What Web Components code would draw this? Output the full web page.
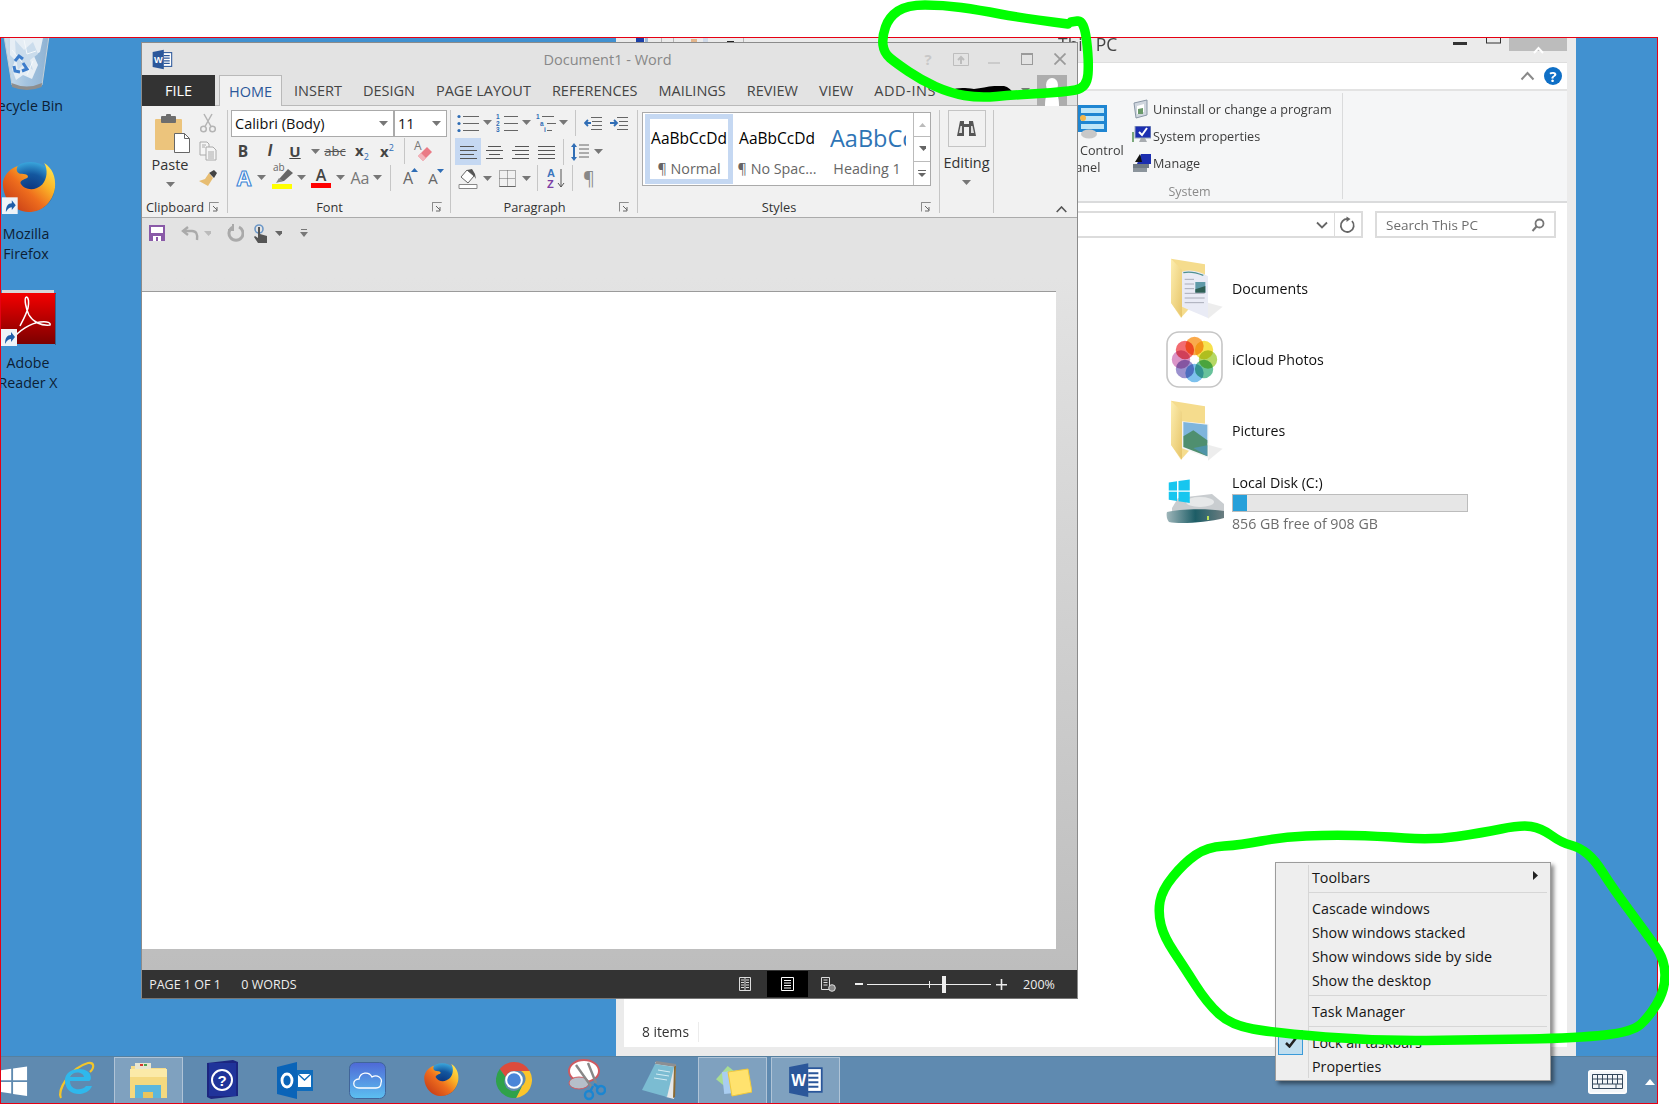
<!doctype html>
<html><head><meta charset="utf-8"><title>Desktop</title>
<style>html,body{margin:0;padding:0;background:#fff}</style></head>
<body><x-screen></x-screen>
<script>
function def(name,css,html){
  customElements.define(name,class extends HTMLElement{
    connectedCallback(){
      if(this.shadowRoot)return;
      const r=this.attachShadow({mode:'open'});
      r.innerHTML='<style>'+css+'</style>'+(typeof html==='function'?html(this):html);
    }
  });
}
function tools(start,items){let x=start,s='';for(const [c,w,h] of items){const l=c-w/2;s+=`<span class="c" style="margin-left:${l-x}px;width:${w}px">${h}</span>`;x=l+w;}return s;}
const caret=(c='#777')=>`<svg width="9" height="5"><path d="M0 0h9L4.5 5z" fill="${c}"/></svg>`;
const vsep=(h=26)=>`<i class="vs" style="height:${h}px"></i>`;
const lines=(w,ys,c='#666',x=0,extra='')=>`<svg width="${w}" height="18" viewBox="0 0 ${w} 18">${ys.map(a=>`<path d="M${a[0]+x} ${a[1]+.5}H${a[2]+x}" stroke="${c}"/>`).join('')}${extra}</svg>`;

/* ---------- icons ---------- */
const wordIcon=s=>`<svg width="${s}" height="${s}" viewBox="0 0 32 32"><rect x="12" y="5.5" width="18" height="21" fill="#fff" stroke="#2b579a" stroke-width="1.6"/><path d="M18 10h9M18 14h9M18 18h9M18 22h9" stroke="#2b579a" stroke-width="1.8"/><path d="M1 4.5 18 1v30L1 27.5z" fill="#2b579a"/><text x="9.5" y="21" font-size="14" font-weight="700" fill="#fff" text-anchor="middle" font-family="Liberation Sans">W</text></svg>`;
const ffIcon=(s,arrow)=>`<svg width="${s}" height="${s}" viewBox="0 0 56 56" style="overflow:visible"><defs><radialGradient id="fb" cx=".5" cy=".62" r=".62"><stop offset="0" stop-color="#0a2f78"/><stop offset=".6" stop-color="#13579f"/><stop offset="1" stop-color="#3aa6dc"/></radialGradient><linearGradient id="fo" x1=".95" y1=".1" x2=".15" y2=".9"><stop offset="0" stop-color="#ffe34d"/><stop offset=".3" stop-color="#fbb327"/><stop offset=".6" stop-color="#ee6d1d"/><stop offset="1" stop-color="#c93f17"/></linearGradient></defs><circle cx="30" cy="27" r="25" fill="url(#fb)"/><path d="M2 22C4 14 10 8 17 6c-2 4-1 7 3 8 4 0 9 1 7 4-4 2-8 3-7 6 4 7 15 8 22 1 5-6 6-15 2-22 8 5 12 14 11 25-2 14-12 25-27 25C13 53 1 39 2 22z" fill="url(#fo)"/>${arrow?shortcut(1,38):''}</svg>`;
const shortcut=(x,y)=>`<g transform="translate(${x} ${y})"><rect width="16" height="17" fill="#eef3f8"/><path d="M4 15c0-6 2-9 6-9V3l4 5-4 5v-3c-2 0-4 1-6 5z" fill="#1f5ea8"/></g>`;
const recycleIcon=`<svg width="47" height="55" viewBox="0 0 47 55"><defs><linearGradient id="rb" x1="0" x2="1"><stop offset="0" stop-color="#cfdfec"/><stop offset=".5" stop-color="#a3c3e0"/><stop offset="1" stop-color="#8fb2d2"/></linearGradient></defs><path d="M1 0H46L39 49Q24 56 9 49z" fill="url(#rb)" stroke="#c3ced6"/><path d="M7 2h33l-3 14-6 4 4 9-6 14-9-4-7 5-4-11 3-9-5-5z" fill="#e6eef5"/><path d="M12 4l9 10 9-8 5 12-8 6 3 10-9-6-6 6-2-12z" fill="#cadcec"/><path d="M21 4l3 14 9-3M9 14l10 12M30 25l-6 14" stroke="#f5f9fc" fill="none"/><path d="M12 25l4-5 4 3M20 27l4 6-5 2M11 30l1 5 5 1" fill="none" stroke="#3c7ccb" stroke-width="3"/><path d="M8.500 47Q24 54 39 47l-.4 4Q24 57 9 51z" fill="#8e8e8e"/></svg>`;
const adobeIcon=`<svg width="55" height="56" viewBox="0 0 55 56"><defs><linearGradient id="ar" x1="0" y1="0" x2="0" y2="1"><stop offset="0" stop-color="#f40000"/><stop offset="1" stop-color="#7c0000"/></linearGradient></defs><rect x="1" y="0" width="52" height="4" fill="#d8d8d8"/><rect x="0" y="3" width="55" height="51" fill="url(#ar)"/><rect x="54" y="4" width="1" height="51" fill="#3b5f86"/><path d="M25 7c-2 2 0 12 3 18 4 7 12 11 21 10 1-2-2-4-10-3-9 1-22 9-27 17M25 7c3 0 3 6 2 11-2 7-5 12-8 18" fill="none" stroke="#fff" stroke-width="1.5"/>${shortcut(0,39)}</svg>`;
const folder=inner=>`<svg width="60" height="65" viewBox="200 50 180 195"><defs><linearGradient id="fy" x1="0" y1="0" x2="1" y2="1"><stop offset="0" stop-color="#fdeeb0"/><stop offset="1" stop-color="#e6c468"/></linearGradient></defs><path d="M326 190l44 12-44 36z" fill="#000" opacity=".07"/><path d="M215 58l102 17v80l-72 80-30-45z" fill="#f5dc8d"/>${inner}<path d="M215 58l33 34v143l-33-45z" fill="url(#fy)"/></svg>`;
const docsIcon=folder(`<path d="M248 97c25-8 52-2 78 14v125c-25-12-52-22-78-34z" fill="#e9ebf5"/><path d="M252 100c20-5 40 0 60 8" stroke="#4d8f90" stroke-width="4" fill="none"/><rect x="288" y="128" width="30" height="32" fill="#5f9aa8"/><path d="M288 150l30-10v20h-30z" fill="#2f5f54"/><path d="M256 120h28M256 134h28M256 148h28M256 162h60M256 176h60M256 190h58" stroke="#a9acb8" stroke-width="3"/>`);
const picsIcon=folder(`<path d="M248 120l80 8v103l-80-30z" fill="#f5f5f5"/><path d="M252 122l72 8v55l-72-20z" fill="#7fb5dc"/><path d="M252 165l30-18 42 30v48l-72-28z" fill="#4f8f6f"/><path d="M282 200l42-8v33z" fill="#4f94a8"/>`);
const petals=['#fa9c2e','#f6dc30','#a9d24a','#4fb88a','#68b7ea','#8a7fc6','#d583bf','#f0535a'];
const photosIcon=`<svg width="57" height="57" viewBox="0 0 57 57"><rect x="1" y="1" width="55" height="55" rx="12" fill="#fff" stroke="#c6c6c6" stroke-width="1.6"/>${petals.map((c,i)=>`<circle cx="28.5" cy="15" r="9.2" fill="${c}" opacity=".86" style="mix-blend-mode:multiply" transform="rotate(${i*45} 28.5 28.5)"/>`).join('')}</svg>`;
const winLogo=(c,o='')=>`<path d="M1 4.5 12 3v12.3H1zM14 2.7 29 .5v14.8H14zM1 17h11v12.3L1 27.8zM14 17h15v15l-15-2.2z" fill="${c}" ${o}/>`;
const diskIcon=`<svg width="60" height="48" viewBox="0 0 60 48"><defs><linearGradient id="dk" x1="0" x2="1"><stop offset="0" stop-color="#9fb6ba"/><stop offset=".5" stop-color="#1d5d66"/><stop offset="1" stop-color="#6b7d80"/></linearGradient></defs><path d="M12 20l34-4 12 10v8L6 38v-8z" fill="#c9cdd0"/><ellipse cx="34" cy="24" rx="14" ry="5" fill="#e6e8e9"/><path d="M1 34c10-3 40-4 57-1v7C40 45 12 46 3 44 1 42 0 37 1 34z" fill="url(#dk)"/><rect x="41" y="38" width="2" height="4" fill="#b9e35a"/><g transform="translate(2 1) scale(.75)">${winLogo('#17c6ef')}</g></svg>`;
const cpIcon=`<svg width="50" height="36" viewBox="0 0 50 36"><rect x="2" y="0" width="46" height="27" fill="#1f86d2"/><rect x="22" y="3" width="23" height="5" fill="#bfe6f8"/><rect x="22" y="11" width="23" height="5" fill="#bfe6f8"/><rect x="22" y="19" width="23" height="5" fill="#bfe6f8"/><circle cx="24" cy="13" r="3" fill="#f5b74a"/><ellipse cx="30" cy="29" rx="8" ry="4.500" fill="#c8c8c8"/></svg>`;
const unIcon=`<svg width="18" height="20" viewBox="0 0 18 20"><path d="M2 4l13-3v15L4 19z" fill="#cfd6de" stroke="#8a97a6"/><path d="M5 7l7-2v8l-7 2z" fill="#fff"/><path d="M6 10l5-1v6H6z" fill="#6a9a6a"/></svg>`;
const sysIcon=`<svg width="19" height="19" viewBox="0 0 19 19"><rect x="3" y="0" width="16" height="12" fill="#1c2fb0" stroke="#9ab"/><path d="M7 6l3 3 5-7" fill="none" stroke="#fff" stroke-width="2"/><path d="M9 12h4l2 4H7z" fill="#a8acb0"/><rect x="0" y="6" width="2" height="10" fill="#7ba87b"/></svg>`;
const mgIcon=`<svg width="19" height="21" viewBox="0 0 19 21"><path d="M9 2l10 0v10H5z" fill="#1c2fb0"/><path d="M8 2l-5 8h7z" fill="#111"/><rect x="1" y="12" width="16" height="4" fill="#6f7a84"/><rect x="1" y="16" width="14" height="4" fill="#8b949c"/></svg>`;

const T={
 cut:`<svg width="16" height="20" viewBox="0 0 16 20" fill="none" stroke="#b4b4b4" stroke-width="1.5"><circle cx="3.5" cy="16" r="2.8"/><circle cx="12.5" cy="16" r="2.8"/><path d="M5 13.5 12 1M11 13.5 4 1"/></svg>`,
 copy:`<svg width="18" height="20" viewBox="0 0 18 20" fill="#f5f5f5" stroke="#aaa"><path d="M1 1h7l2 2v11H1z"/><path d="M7 6h7l3 3v10H7z"/><path d="M9 11h6M9 13h6M9 15h6M9 17h6M3 4h4M3 6h3" stroke="#aaa"/></svg>`,
 brush:`<svg width="18" height="17" viewBox="0 0 18 17"><path d="M12 5l-2 -2 5-3 3 3-3 5z" fill="#444"/><path d="M10 3l4 5-5 8-9-5 6-2z" fill="#e7bd72"/></svg>`,
 paste:`<svg width="35" height="39" viewBox="0 0 35 39"><rect x="0" y="5" width="27" height="31" rx="1" fill="#ecc47c"/><rect x="6" y="2" width="15" height="7" rx="1" fill="#6d6d6d"/><rect x="11" y="0" width="5" height="5" rx="1" fill="#6d6d6d"/><path d="M19.5 19.5h10l5 5v14h-15z" fill="#fff" stroke="#666"/><path d="M29.5 19.5v5h5" fill="none" stroke="#666"/></svg>`,
 launch:`<svg width="10" height="10" viewBox="0 0 10 10" fill="none" stroke="#8d8d8d"><path d="M.5 5V.5h9M.5 .5"/><path d="M.5 .5v9M.5.5h9"/><path d="M4 4l4 4M8 5v4H4" stroke="#666"/></svg>`,
 eraser:`<svg width="20" height="24" viewBox="0 0 20 24"><text x="1" y="11" font-size="12" fill="#777" font-family="Open Sans">A</text><path d="M5 17l9-9 5 5-9 9z" fill="#ea7a85"/><path d="M5 17l3-3 5 5-3 3z" fill="#f3b3ba"/></svg>`,
 hl:`<svg width="20" height="14" viewBox="0 0 20 14"><path d="M4 13l2-4 8-9 5 4-9 8z" fill="#666"/><path d="M2 14l3-5 4 3z" fill="#888"/></svg>`,
 bul:lines(22,[[6,2,22],[6,9,22],[6,16,22]],'#666',0,'<g fill="#2f6db5"><circle cx="2" cy="2.5" r="1.6"/><circle cx="2" cy="9.5" r="1.6"/><circle cx="2" cy="16.5" r="1.6"/></g>'),
 num:lines(22,[[8,2,22],[8,9,22],[8,16,22]],'#666',0,'<g fill="#2f6db5" font-size="6.5" font-weight="700" font-family="Liberation Sans"><text x="0" y="5">1</text><text x="0" y="12">2</text><text x="0" y="18">3</text></g>'),
 ml:lines(20,[[6,2,18],[11,9,20],[11,16,16]],'#666',0,'<g fill="#2f6db5" font-size="6.5" font-weight="700" font-family="Liberation Sans"><text x="0" y="5">1</text><text x="4" y="12">a</text><text x="8" y="18">i</text></g>'),
 out:lines(18,[[7,3,18],[8,7,18],[8,11,18],[7,15,18]],'#666',0,'<path d="M7 9H1m3-3L1 9l3 3" stroke="#2f6db5" stroke-width="1.8" fill="none"/>'),
 ind:lines(18,[[7,3,18],[9,7,18],[9,11,18],[7,15,18]],'#666',0,'<path d="M0 9h6M4 6l3 3-3 3" stroke="#2f6db5" stroke-width="1.8" fill="none"/>'),
 al:lines(17,[[0,3,14],[0,7,17],[0,11,14],[0,15,17]],'#555'),
 ac:lines(17,[[2,3,15],[0,7,17],[3,11,14],[0,15,17]],'#555'),
 ar:lines(17,[[3,3,17],[0,7,17],[3,11,17],[0,15,17]],'#555'),
 aj:lines(17,[[0,3,17],[0,7,17],[0,11,17],[0,15,17]],'#555'),
 sp:`<svg width="18" height="20" viewBox="0 0 18 20"><path d="M3 1l3 4H4v10h2l-3 4-3-4h2V5H0z" fill="#2f6db5"/><path d="M8 3h10M8 7h10M8 11h10M8 15h10" stroke="#666"/></svg>`,
 fill:`<svg width="21" height="21" viewBox="0 0 21 21"><path d="M4 9l6-7 7 6-6 7z" fill="#fff" stroke="#666"/><path d="M10 2l5-1 3 5 1 5-2-3z" fill="#555"/><path d="M2 16.5h18v4H2z" fill="#fff" stroke="#888"/></svg>`,
 bor:`<svg width="17" height="17" viewBox="0 0 17 17" fill="none" stroke="#666" stroke-dasharray="1 1"><path d="M.5.5h16v16H.5zM8.5 .5v16M.5 8.5h16"/><path d="M.5 16.5h16" stroke-dasharray="none"/></svg>`,
 sort:`<svg width="18" height="22" viewBox="0 0 18 22"><text x="0" y="10" font-size="11" font-weight="700" fill="#3a75bd" font-family="Liberation Sans">A</text><text x="0" y="21" font-size="11" font-weight="700" fill="#7c3fa5" font-family="Liberation Sans">Z</text><path d="M14 2v18M11 16l3 4 3-4" fill="none" stroke="#555"/></svg>`,
 bino:`<svg width="19" height="17" viewBox="0 0 19 17" fill="#555"><path d="M3 1h4v3h5V1h4l3 15h-7V7H7v9H0z"/><path d="M3.500 6h1.500v7H2zM14 6h1.500l1.500 7h-3z" fill="#ddd"/></svg>`,
 save:`<svg width="16" height="16" viewBox="0 0 16 16"><path d="M0 0h16v16H0z" fill="#8a5aa8"/><rect x="2" y="2" width="12" height="6" fill="#fff"/><rect x="4" y="11" width="8" height="5" fill="#fff"/><rect x="7" y="12" width="2" height="4" fill="#8a5aa8"/></svg>`,
 undo:`<svg width="18" height="15" viewBox="0 0 18 15" fill="none" stroke="#aaa" stroke-width="2.4"><path d="M7 1 2 5l5 4"/><path d="M2 5h9c4 0 6 3 5 9"/></svg>`,
 redo:`<svg width="17" height="18" viewBox="0 0 17 18" fill="none" stroke="#aaa" stroke-width="3"><path d="M6 3a7 7 0 1 0 6 0"/><path d="M6 0v6H1" stroke-width="2"/></svg>`,
 touch:`<svg width="14" height="19" viewBox="0 0 14 19"><circle cx="5" cy="5" r="4" fill="none" stroke="#6d98c8" stroke-width="1.6"/><path d="M4 3h2v7l7 2v7H4L0 13l1-1 3 2z" fill="#555"/></svg>`,
 cust:`<svg width="8" height="8" viewBox="0 0 8 8" fill="#777"><rect x="1" y="0" width="6" height="1"/><path d="M0 3h8L4 8z"/></svg>`,
 read:`<svg width="12" height="14" viewBox="0 0 12 14" fill="none" stroke="#ddd"><path d="M.5.5h11v13H.5zM6 .5v13M2 3h3M2 5.500h3M2 8h3M2 10.500h3M7 3h3M7 5.500h3M7 8h3M7 10.500h3"/></svg>`,
 print:`<svg width="13" height="14" viewBox="0 0 13 14" fill="none" stroke="#fff"><path d="M.5.5h12v13H.5zM3 3.500h7M3 6h7M3 8.500h7M3 11h7"/></svg>`,
 web:`<svg width="15" height="15" viewBox="0 0 15 15" fill="none" stroke="#ddd"><path d="M.5.5h8v12H.5zM2.500 3h4M2.500 5.500h4M2.500 8h4"/><circle cx="11" cy="11" r="3.300" fill="#888"/></svg>`,
};

/* ---------- taskbar icons ---------- */
const TI={
 ie:`<svg width="40" height="40" viewBox="0 0 40 40"><path d="M5 38C1 30 14 8 32 3c6-1 7 4 2 9" fill="none" stroke="#f2c52b" stroke-width="2.200"/><path d="M33 21H14c0 10 12 10 16 5h6c-4 11-26 12-27-5C8 6 35 5 35 18c0 1-1 3-2 3zM14 17h14c-1-6-12-6-14 0z" fill="#2fb8ec"/></svg>`,
 ex:`<svg width="40" height="38" viewBox="0 0 40 38"><path d="M2 5h14v3H2z" fill="#f6dc8a"/><path d="M6 2h16v6H6z" fill="#e9e6d0"/><rect x="11" y="3" width="3" height="2" fill="#d6382d"/><rect x="15" y="3" width="3" height="2" fill="#4ea24e"/><path d="M22 7h15v4H22z" fill="#f6dc8a"/><path d="M1 8h37v29H1z" fill="#f5d97f"/><path d="M1 8h37v8H1z" fill="#fbeaa8"/><path d="M6 37V24h26v13h-8v-6H14v6z" fill="#5cb7dd"/><path d="M14 31h10v6H14z" fill="#e9c55e"/></svg>`,
 help:`<svg width="34" height="40" viewBox="0 0 34 40"><path d="M2 3 28 0l5 2v34l-27 3-4-2z" fill="#1c2680"/><rect x="4" y="3" width="27" height="33" fill="#20349a"/><circle cx="17" cy="20" r="10" fill="none" stroke="#fff" stroke-width="2"/><text x="17" y="25.500" font-size="15" font-weight="700" fill="#fff" text-anchor="middle" font-family="Liberation Sans">?</text></svg>`,
 ol:`<svg width="36" height="37" viewBox="0 0 36 37"><rect x="20" y="8" width="16" height="21" fill="#0f6cbc"/><path d="M21 12h13v13H21z" fill="#fff"/><path d="M21 12l6.500 6 6.500-6" fill="none" stroke="#0f6cbc" stroke-width="1.400"/><path d="M0 5 20 0v37L0 32z" fill="#0a64b8"/><ellipse cx="10" cy="18.500" rx="5" ry="6.500" fill="none" stroke="#fff" stroke-width="2.800"/></svg>`,
 ic:`<svg width="37" height="37" viewBox="0 0 37 37"><defs><linearGradient id="cg" x1="0" y1="0" x2="0" y2="1"><stop offset="0" stop-color="#4f69d6"/><stop offset="1" stop-color="#5cc0f0"/></linearGradient></defs><rect x=".5" y=".5" width="36" height="36" rx="6" fill="url(#cg)" stroke="#40659a"/><path d="M10 26c-7 0-7-9 0-9 1-7 10-8 13-2 5-3 11 1 9 6 0 3-2 5-5 5z" fill="none" stroke="#fff" stroke-width="1.300"/></svg>`,
 ch:`<svg width="36" height="36" viewBox="0 0 36 36"><path d="M18 0a18 18 0 0 1 15.600 9H18a9 9 0 0 0-8.500 6L3.700 7A18 18 0 0 1 18 0z" fill="#dd4b3c"/><path d="M33.600 9A18 18 0 0 1 20 35.900L26 24a9 9 0 0 0-1-15z" fill="#fbc52b"/><path d="M3.700 7A18 18 0 0 0 20 35.900L26 24a9 9 0 0 1-16.500-9z" fill="#2fa24a"/><circle cx="18" cy="18" r="8.800" fill="#fff"/><circle cx="18" cy="18" r="6.800" fill="#4a85d8"/></svg>`,
 sn:`<svg width="38" height="42" viewBox="0 0 38 42"><ellipse cx="16" cy="12" rx="15" ry="11" fill="#fff" stroke="#cf5a60" stroke-width="2"/><ellipse cx="11" cy="24" rx="10" ry="6" fill="#b6bfc9" stroke="#cf5a60"/><path d="M8 6l17 24M20 4l8 20" stroke="#888" stroke-width="2.400"/><circle cx="21" cy="36" r="4" fill="none" stroke="#1b86d1" stroke-width="2.400"/><circle cx="33" cy="31" r="4" fill="none" stroke="#1b86d1" stroke-width="2.400"/><path d="M25 27l-3 6M26 25l5 4" stroke="#1b86d1" stroke-width="2.400"/></svg>`,
 np:`<svg width="36" height="40" viewBox="0 0 36 40"><path d="M13 2l21 3-2 34-8-2z" fill="#e8e8e8"/><path d="M14 1l20 3-1 3-20-3z" fill="#8c8f93"/><path d="M13 4l19 3-7 30L0 30z" fill="#7bbcd2"/><path d="M16 10l12 2M14 14l13 2M12 18l13 2" stroke="#d4ecf4"/><path d="M32 7l2-2-1 32-2 1z" fill="#8a6a33"/></svg>`,
 st:`<svg width="38" height="33" viewBox="0 0 38 33"><path d="M2 14 15 2l12 12-13 12z" fill="#a9dd92" transform="rotate(-6 14 14)"/><rect x="9" y="7" width="20" height="22" fill="#a9cdf1" transform="rotate(-6 19 18)"/><path d="M14 8l20-3 4 23-20 4z" fill="#ffe26e" stroke="#f0c93a"/></svg>`,
};

/* ---------- elements ---------- */
def('x-screen',`:host{display:block;position:relative;width:1669px;height:1104px;overflow:hidden;background:#fff;font-family:"Open Sans","Noto Sans",sans-serif}
.white{height:37px}
svg.ink{position:absolute;left:0;top:0;pointer-events:none;z-index:90}`,
()=>{
 const smooth=(p,closed)=>{const m=(a,b)=>[(a[0]+b[0])/2,(a[1]+b[1])/2];let d='M'+(closed?m(p[p.length-1],p[0]):p[0]).join(' ');const n=p.length;const end=closed?n:n-1;for(let i=closed?0:1;i<end;i++){const e=m(p[i],p[(i+1)%n]);d+=`Q${p[i].join(' ')} ${e.join(' ')}`;}if(!closed)d+='L'+p[n-1].join(' ');return d;};
 const a=[[1068,24],[1021,18],[979,10],[943,5],[907,5],[889,17],[882,37],[884,53],[896,63],[921,80],[950,93],[979,98],[1014,95],[1064,92],[1087,88],[1089,60],[1084,20],[1071,22]];
 const b=[[1207,847],[1241,845],[1282,837],[1330,835],[1376,836],[1433,840],[1481,833],[1521,825],[1541,828],[1562,843],[1579,847],[1595,860],[1612,887],[1646,933],[1665,960],[1665,990],[1649,1017],[1632,1032],[1578,1038],[1477,1040],[1376,1041],[1275,1033],[1231,1025],[1207,1003],[1184,967],[1164,937],[1158,913],[1162,890],[1184,863]];
 return `<div class="white"></div>
 <x-desktop>
  <x-dicon style="left:-19px;top:-1px" gap="5" lines="Recycle Bin">${recycleIcon}</x-dicon>
  <x-dicon style="left:-19px;top:123px" gap="9" lines="Mozilla|Firefox" nudge="2">${ffIcon(55,true)}</x-dicon>
  <x-dicon style="left:-17px;top:253px" gap="7" lines="Adobe|Reader X" nudge="0">${adobeIcon}</x-dicon>
  <x-explorer></x-explorer>
  <x-word></x-word>
  <x-taskbar></x-taskbar>
  <x-menu></x-menu>
 </x-desktop>
 <svg class="ink" width="1669" height="1104" fill="none" stroke="#00ff00" stroke-width="9.500" stroke-linecap="round" stroke-linejoin="round"><path d="${smooth(a)}"/><path d="${smooth(b,true)}"/></svg>`;
});

def('x-desktop',`:host{display:flex;flex-direction:column;position:relative;width:1658px;height:1067px;background:#4191d0;overflow:hidden}
:host::after{content:"";position:absolute;left:0;top:0;right:0;bottom:0;border:1px solid #e60012;pointer-events:none;z-index:80}`,`<slot></slot>`);

def('x-dicon',`:host{position:absolute;display:flex;flex-direction:column;align-items:center;width:90px;color:#0c2034;font-size:14.200px;line-height:20px;text-align:center}
.i{display:flex;height:auto}`,
h=>`<div class="i" style="margin-left:${(h.getAttribute('nudge')||0)*2}px;margin-bottom:${h.getAttribute('gap')}px"><slot></slot></div>${h.getAttribute('lines').split('|').map(l=>`<div style="white-space:nowrap">${l}</div>`).join('')}`);

/* ribbon group in Word */
def('x-group',`:host{display:flex;flex-direction:column;flex:none;box-sizing:border-box;height:111px;padding-top:4px;background:linear-gradient(#c6c6c6,#c6c6c6) right 4px/1px 103px no-repeat}
.b{height:89px}
.l{display:flex;height:16px;line-height:16px;font-size:12.800px;color:#333}
.l span{flex:1;text-align:center}
.l i{flex:none;width:10px;margin:3px 9px 0 1px;display:flex}`,
h=>`<div class="b"><slot></slot></div><div class="l"><span>${h.getAttribute('label')}</span><i>${h.hasAttribute('nolaunch')?'':T.launch}</i></div>`);

def('x-word',`:host{position:absolute;left:141px;top:5px;z-index:10;display:flex;flex-direction:column;box-sizing:border-box;width:937px;height:957px;border:1px solid #8b8b8b;border-bottom:1px solid #777;background:#e3e3e3}
.c{display:flex;align-items:center;justify-content:center;flex:none}
.vs{display:block;width:1px;background:#c6c6c6}
.row{display:flex;align-items:center}
.title{display:grid;grid-template-columns:1fr auto 1fr;height:32px;align-items:center;flex:none}
.title .logo{display:flex;padding-left:10px}
.title .t{font-size:14.500px;color:#888;margin-left:-4px}
.btns{display:flex;justify-content:flex-end;align-items:center;padding-right:.5px}
.btns span{display:flex;width:33px;height:26px;align-items:center;justify-content:center;color:#c8c8c8;font-size:15px;font-weight:700}
.tabs{display:flex;height:31px;box-sizing:border-box;border-bottom:1px solid #b9b9b9;align-items:stretch;flex:none;font-size:14.500px;color:#444;white-space:nowrap}
.tabs b{font-weight:400;display:flex;align-items:center;margin-left:21px}
.tabs .file{margin:0;width:73px;justify-content:center;background:#333;color:#fff;height:31px;box-sizing:border-box}
.tabs .home{margin-left:4px;width:63px;justify-content:center;color:#2b579a;background:#f1f1f1;border:1px solid #b9b9b9;border-bottom:0;height:31px;box-sizing:border-box}
.tabs .home+b{margin-left:12px}
.acct{margin-left:auto;display:flex;align-items:center;height:30px}
.acct .av{width:30px;height:31px;background:#adadad;margin:0 10px 0 7px;display:flex;align-items:flex-start;justify-content:center;overflow:hidden}
.rib{display:flex;height:112px;box-sizing:border-box;background:#f1f1f1;border-bottom:1px solid #ababab;flex:none;color:#444}
.combo{display:flex;align-items:center;height:27px;box-sizing:border-box;border:1px solid #aaa;background:#fff;font-size:14.500px;color:#111;padding:0 5px 0 3px;justify-content:space-between;white-space:nowrap}
.b{font-weight:700;font-size:15px;color:#444}
.sty{display:flex;flex-direction:column;align-items:center;height:70px;justify-content:space-between;box-sizing:border-box;font-size:14.300px;color:#666;white-space:nowrap;overflow:hidden}
.gal{display:flex;margin:2px 0 0 4px;width:289px;height:74px;box-sizing:border-box;border:1px solid #aaa;background:#fff}
.gal .sel{width:88px;border:5px solid #c5d8f2;height:70px;margin:1px 0 0 2px;padding:7px 0 1px}
.gal .pl{width:88px;height:70px;margin-top:1px;padding:12px 0 6px}
.gal .hd{width:92px;height:70px;margin-top:1px;padding:6px 0 6px 0}
.aa{font-size:15.500px;color:#000;line-height:24px}
.hd .aa{font-size:23.500px;color:#2e74b5;line-height:36px;width:76px;overflow:hidden;margin-right:-2px}
.sc{margin-left:auto;width:16px;border-left:1px solid #bbb;display:flex;flex-direction:column}
.sc span{flex:1;display:flex;align-items:center;justify-content:center;border-bottom:1px solid #bbb}
.sc span:last-child{border:0}
.work{flex:1;display:flex;flex-direction:column;background:linear-gradient(#e3e3e3 0,#e3e3e3 8%,#bdbdbd 100%)}
.qat{height:73px;flex:none;display:flex;align-items:flex-start}
.qat .row{height:30px}
.page{height:658px;width:914px;box-sizing:border-box;background:#fff;border-top:1px solid #9b9b9b;flex:none}
.status{height:28px;background:#333;color:#eee;font-size:12.500px;flex:none;display:flex;align-items:center;white-space:nowrap}
.status .c{height:28px}
.slider{position:relative;height:1px;background:#eee}
.slider i{position:absolute;background:#eee}`,
()=>`
<div class="title"><div class="logo">${wordIcon(21)}</div><div class="t">Document1 - Word</div>
 <div class="btns"><span>?</span>
 <span><svg width="16" height="13" viewBox="0 0 16 13" fill="none" stroke="#bdbdbd"><path d="M.5.5h15v12H.5z"/><path d="M8 11V4M5 7l3-3 3 3" stroke-width="2"/></svg></span>
 <span><svg width="12" height="12"><path d="M0 10h12" stroke="#cbcbcb" stroke-width="2"/></svg></span>
 <span><svg width="12" height="12"><rect x=".5" y="1" width="11" height="10.500" fill="none" stroke="#9a9a9a"/><path d="M0 1h12" stroke="#9a9a9a" stroke-width="2"/></svg></span>
 <span><svg width="12" height="12"><path d="M.5.5l11 11M11.500.5l-11 11" stroke="#9a9a9a" stroke-width="1.800"/></svg></span></div>
</div>
<div class="tabs"><b class="file">FILE</b><b class="home">HOME</b><b>INSERT</b><b>DESIGN</b><b>PAGE LAYOUT</b><b>REFERENCES</b><b>MAILINGS</b><b>REVIEW</b><b>VIEW</b><b style="letter-spacing:.6px">ADD-INS</b>
 <div class="acct"><svg width="66" height="9" viewBox="0 0 66 9"><path d="M0 5C8 1 14 2 24 3c10-1 18-4 30-3 4 1 8 4 10 8-14 2-30-1-44 0C10 9 3 8 0 5z" fill="#000"/></svg><span style="display:flex;margin-left:5px">${caret('#777')}</span>
 <div class="av"><svg width="16" height="31" viewBox="0 0 16 31"><ellipse cx="8" cy="10" rx="6" ry="7" fill="#fff"/><path d="M1 31c0-10 2-14 7-14s7 4 7 14z" fill="#fff"/></svg></div></div>
</div>
<div class="rib">
 <x-group label="Clipboard" style="width:86px"><div class="row" style="align-items:flex-start">${tools(142,[[170,40,`<div style="display:flex;flex-direction:column;align-items:center;font-size:14.500px;color:#333"><div style="display:flex;margin:4px 0 0 5px">${T.paste}</div><div style="line-height:20px;margin-top:2px">Paste</div><div style="display:flex;margin-top:7px">${caret()}</div></div>`],[208,24,`<div style="display:flex;flex-direction:column;align-items:center;margin-top:3px"><div style="display:flex">${T.cut}</div><div style="display:flex;margin-top:8px">${T.copy}</div><div style="display:flex;margin-top:9px">${T.brush}</div></div>`]])}</div></x-group>
 <x-group label="Font" style="width:223px">
  <div class="row" style="height:27px;padding-left:3px"><div class="combo" style="width:163px"><span>Calibri (Body)</span>${caret()}</div><div class="combo" style="width:53px;margin-left:0"><span>11</span>${caret()}</div></div>
  <div class="row" style="height:26px;margin-top:1px">${tools(228,[[243,18,'<span class="b" style="font-size:15.500px">B</span>'],[270,18,'<span class="b" style="font-style:italic;font-family:Liberation Sans;font-size:16px">I</span>'],[295,20,'<span class="b" style="text-decoration:underline">U</span>'],[315,10,caret()],[335,28,'<span style="text-decoration:line-through;font-size:13px;color:#555">abc</span>'],[362,22,'<span class="b">x<sub style="font-size:9px;color:#2f6db5;font-weight:400">2</sub></span>'],[387,22,'<span class="b">x<sup style="font-size:9px;color:#2f6db5;font-weight:400">2</sup></span>'],[404,1,vsep()],[423,22,T.eraser]])}</div>
  <div class="row" style="height:27px">${tools(228,[[244,22,'<span style="font-size:21px;line-height:26px;font-weight:700;color:#fff;-webkit-text-stroke:1.1px #3d85d6">A</span>'],[261,10,caret()],[282,20,`<div style="display:flex;flex-direction:column;align-items:center;width:20px;position:relative"><span style="position:absolute;left:1px;top:-6px;font-size:10px;line-height:12px;color:#666">ab</span><div style="display:flex;margin-left:4px;margin-top:2px">${T.hl}</div><i style="display:block;width:20px;height:5px;background:#ff0;margin-top:1px"></i></div>`],[301,10,caret()],[321,20,'<div style="display:flex;flex-direction:column;align-items:center;width:20px"><span style="font-size:16px;line-height:16px;font-weight:600;color:#444">A</span><i style="display:block;width:20px;height:5px;background:#f00"></i></div>'],[340,10,caret()],[360,22,'<span style="font-size:16px;color:#777">Aa</span>'],[377,10,caret()],[390,1,vsep()],[408,20,'<span style="font-size:16px;color:#666;position:relative">A<svg style="position:absolute;right:-5px;top:1px" width="7" height="4"><path d="M0 4h7L3.500 0z" fill="#2f6db5"/></svg></span>'],[433,20,'<span style="font-size:15px;color:#666;position:relative">A<svg style="position:absolute;right:-6px;top:1px" width="7" height="4"><path d="M0 0h7L3.500 4z" fill="#2f6db5"/></svg></span>']])}</div>
 </x-group>
 <x-group label="Paragraph" style="width:187px">
  <div class="row" style="height:25px">${tools(451,[[468,22,T.bul],[487,10,caret()],[507,22,T.num],[526,10,caret()],[546,20,T.ml],[563,10,caret()],[575,1,vsep()],[593,18,T.out],[619,18,T.ind]])}</div>
  <div class="row" style="height:27px;margin-top:3px">${tools(451,[[468,26,`<div style="display:flex;align-items:center;justify-content:center;width:26px;height:27px;background:#c5d8f2">${T.al}</div>`],[494,17,T.ac],[520,17,T.ar],[546,17,T.aj],[563,1,vsep()],[580,18,T.sp],[598,10,caret()]])}</div>
  <div class="row" style="height:26px">${tools(451,[[467,21,T.fill],[487,10,caret()],[507,17,T.bor],[526,10,caret()],[537,1,vsep()],[556,18,T.sort],[572,1,vsep()],[589,14,'<span style="font-size:18px;color:#888">¶</span>']])}</div>
 </x-group>
 <x-group label="Styles" style="width:302px"><div class="gal">
   <div class="sty sel"><div class="aa">AaBbCcDd</div><div>¶ Normal</div></div>
   <div class="sty pl"><div class="aa">AaBbCcDd</div><div>¶ No Spac...</div></div>
   <div class="sty hd"><div class="aa">AaBbCcDd</div><div>Heading 1</div></div>
   <div class="sc"><span><svg width="7" height="4"><path d="M0 4h7L3.500 0z" fill="#bbb"/></svg></span><span>${caret('#666').replace('width="9"','width="7"')}</span><span><svg width="8" height="7"><path d="M0 .5h8" stroke="#666"/><path d="M0 3h8L4 7z" fill="#666"/></svg></span></div>
 </div></x-group>
 <x-group label="" nolaunch style="width:54px"><div style="display:flex;flex-direction:column;align-items:center;padding-right:1px;font-size:14.500px;color:#333">
   <div style="display:flex;align-items:center;justify-content:center;width:38px;height:37px;box-sizing:border-box;border:1px solid #c4c4c4">${T.bino}</div>
   <div style="margin-top:5px;line-height:22px">Editing</div><div style="display:flex;margin-top:6px">${caret()}</div></div></x-group>
 <div style="flex:1;display:flex;justify-content:flex-end;align-items:flex-end;padding:0 10px 4px 0"><svg width="11" height="7"><path d="M.7 6 5.500 1l4.800 5" fill="none" stroke="#555" stroke-width="1.600"/></svg></div>
</div>
<div class="work">
 <div class="qat"><div class="row">${tools(142,[[157,16,T.save],[190,18,T.undo],[207,8,caret('#bbb').replace('width="9"','width="7"')],[235,17,T.redo],[261,14,T.touch],[278,8,caret('#666').replace('width="9"','width="7"')],[304,8,T.cust]])}</div></div>
 <div class="page"></div>
 <div style="flex:1"></div>
</div>
<div class="status">${tools(142,[[185,76,'<span>PAGE 1 OF 1</span>'],[269,60,'<span>0 WORDS</span>'],[745,14,T.read],[787,41,`<span style="display:flex;width:41px;height:26px;background:#000;align-items:center;justify-content:center">${T.print}</span>`],[828,15,T.web],[859,8,'<svg width="8" height="2"><rect width="8" height="2" fill="#eee"/></svg>'],[929,124,'<div class="slider" style="width:124px"><i style="left:62px;top:-3px;width:1px;height:7px"></i><i style="left:75px;top:-8px;width:4px;height:17px"></i></div>'],[1001,12,'<svg width="11" height="11"><path d="M0 5h11v1.600H0zM4.700 0h1.600v11H4.700z" fill="#eee"/></svg>'],[1039,40,'<span>200%</span>']])}</div>
`);

def('x-explorer',`:host{position:absolute;left:616px;top:-8px;z-index:5;display:flex;flex-direction:column;box-sizing:border-box;width:960px;height:1027px;background:#ebebeb;padding:0 9px 9px 8px;color:#111}
.tb{height:33px;display:flex;flex:none;position:relative}
.tb .name{margin-left:434px;font-size:17.500px;color:#444;align-self:center;margin-top:-4px;line-height:30px;white-space:nowrap}
.tb .mn{margin-left:auto;display:flex;align-items:flex-start}
.tb .mn span{display:flex;justify-content:center;align-items:flex-start}
.tb .x{width:58px;height:22px;background:#bcbcbc;align-items:center !important;color:#fff;padding-top:3px;box-sizing:border-box}
.tr{height:29px;background:#fff;flex:none;display:flex;justify-content:flex-end;align-items:center;border-bottom:2px solid #e3e3e3;box-sizing:border-box;border-top:1px solid #dedede;padding-right:5px}
.help{width:18px;height:18px;border-radius:50%;background:#0f6fc6;color:#fff;font-size:15px;font-weight:700;display:flex;align-items:center;justify-content:center;margin-left:9px}
.rb{height:112px;box-sizing:border-box;background:#f5f6f7;border-bottom:2px solid #dadbdc;flex:none;display:flex;font-size:12.650px;color:#3c3c3c}
.sys{margin-left:412px;width:307px;box-sizing:border-box;display:flex;flex-direction:column;background:linear-gradient(#dadbdc,#dadbdc) right 2px/1px 106px no-repeat}
.sysb{flex:1;display:flex}
.cp{width:96px;display:flex;flex-direction:column;align-items:center;padding-top:14px;text-align:center;line-height:17px;white-space:nowrap;flex:none}
.cp svg{margin-bottom:1px}
.ln{padding-top:4px}
.ln div{height:27px;display:flex;align-items:center;white-space:nowrap}
.ln i{width:21px;display:flex;flex:none}
.sl{text-align:center;height:19px;line-height:19px;font-size:12.500px;color:#8a8a8a;margin-bottom:0}
.addr{background:#fff;padding:8px 11px 0 0;display:flex;flex:none;height:35px;box-sizing:border-box}
.box{height:27px;box-sizing:border-box;border:2px solid #dcdcdc;display:flex;align-items:center;background:#fff}
.main{flex:1;background:#fff;display:flex;flex-direction:column;min-height:0}
.tiles{padding:15px 0 0 542px}
.st{margin-top:auto;height:30px;display:flex;align-items:flex-start;padding:5px 0 0 18px;box-sizing:border-box;line-height:20px;font-size:13.800px;color:#333}
.st i{width:1px;height:20px;background:#ececec;margin-left:8px}`,
`<div class="tb">
 <svg style="position:absolute;left:0;top:8px" width="130" height="6"><rect x="12" width="8" height="6" fill="#1a3fa8"/><rect x="21" width="3" height="6" fill="#9fb9d8"/><rect x="37" width="1" height="6" fill="#b4b4b4"/><rect x="49" width="1" height="6" fill="#b4b4b4"/><rect x="67" y="2" width="6" height="4" fill="#e2b48a"/><rect x="79" width="5" height="6" fill="#cfd9e8"/><rect x="103" y="4" width="7" height="2" fill="#222"/><rect x="119" width="1" height="6" fill="#b4b4b4"/></svg>
 <span class="name">This PC</span>
 <div class="mn"><span style="margin-top:13px;margin-right:19px"><svg width="14" height="3"><rect width="14" height="3" fill="#333"/></svg></span><span style="margin-top:-2px;margin-right:8px"><svg width="15" height="17"><rect x=".5" y=".5" width="14" height="15.500" fill="none" stroke="#333"/></svg></span><span class="x"><svg style="margin-top:17px" width="11" height="8"><path d="M1 7 5.500 2 10 7" fill="none" stroke="#fff" stroke-width="2"/></svg></span></div>
</div>
<div class="tr"><svg width="15" height="10"><path d="M1.500 8.500 7.500 2l6 6.500" fill="none" stroke="#8a8a8a" stroke-width="2"/></svg><div class="help">?</div></div>
<div class="rb"><div class="sys"><div class="sysb"><div class="cp">${cpIcon}<div>Open Control<br>Panel</div></div>
 <div class="ln"><div><i>${unIcon}</i>Uninstall or change a program</div><div><i>${sysIcon}</i>System properties</div><div><i>${mgIcon}</i>Manage</div></div></div>
 <div class="sl">System</div></div></div>
<div class="addr"><div class="box" style="flex:1;justify-content:flex-end"><svg width="12" height="8" style="margin-right:6px"><path d="M1 1.500l5 5 5-5" fill="none" stroke="#666" stroke-width="1.800"/></svg><i style="width:1px;height:25px;background:#dcdcdc"></i><svg width="26" height="18" viewBox="0 0 26 18"><path d="M17 5a6.500 6.500 0 1 1-4-2" fill="none" stroke="#666" stroke-width="1.800"/><path d="M11.500 .5l4 2.500-4 3z" fill="#666"/></svg></div>
 <div class="box" style="width:181px;margin-left:12px;padding:0 9px;justify-content:space-between;font-size:13.500px;color:#6d6d6d"><span>Search This PC</span><svg width="14" height="14"><circle cx="8.500" cy="5.500" r="4" fill="none" stroke="#777" stroke-width="1.800"/><path d="M5.500 8.500 1.500 13" stroke="#777" stroke-width="2"/></svg></div></div>
<div class="main"><div class="tiles">
 <x-tile>${docsIcon}<span>Documents</span></x-tile>
 <x-tile>${photosIcon}<span>iCloud Photos</span></x-tile>
 <x-tile>${picsIcon}<span>Pictures</span></x-tile>
 <x-tile>${diskIcon}<div style="padding-top:5px"><div style="line-height:20px;margin-bottom:1px">Local Disk (C:)</div><div style="width:236px;height:18px;box-sizing:border-box;border:1px solid #bcbcbc;background:#e6e6e6"><div style="width:14px;height:16px;background:#26a0da"></div></div><div style="line-height:22px;margin-top:1px;color:#6d6d6d">856 GB free of 908 GB</div></div></x-tile>
</div>
<div class="st">8 items<i style="margin-left:9px"></i></div></div>`);

def('x-tile',`:host{display:grid;grid-template-columns:66px auto;justify-content:start;align-items:center;height:71px;font-size:14.200px;color:#111;white-space:nowrap}`,`<slot></slot>`);

def('x-taskbar',`:host{display:flex;margin-top:auto;height:48px;flex:none;box-sizing:border-box;background:#5f8ab0;border-top:1px solid #56809f;align-items:stretch;z-index:20;position:relative}
.st{width:39px;flex:none;display:flex;align-items:center;box-sizing:border-box}
.btn{width:69px;margin:0 2px;display:flex;align-items:center;justify-content:center;box-sizing:border-box;flex:none;padding-bottom:1px}
.on{background:rgba(255,255,255,.2);border:1px solid rgba(255,255,255,.38);border-bottom-color:transparent}
.kb{margin-left:auto;margin-right:18px;display:flex;align-items:center;padding-top:2px}
.ar{margin-right:1px;display:flex;align-items:center;padding-top:2px;width:12px}`,
`<div class="st"><svg width="28" height="34" viewBox="0 0 30 32">${winLogo('#fff')}</svg></div>
<div class="btn">${TI.ie}</div><div class="btn on">${TI.ex}</div><div class="btn">${TI.help}</div><div class="btn">${TI.ol}</div><div class="btn">${TI.ic}</div><div class="btn">${ffIcon(36)}</div><div class="btn">${TI.ch}</div><div class="btn">${TI.sn}</div><div class="btn">${TI.np}</div><div class="btn on">${TI.st}</div><div class="btn on">${wordIcon(36)}</div>
<div class="kb"><svg width="39" height="24" viewBox="0 0 39 24"><rect x=".75" y=".75" width="37.500" height="22.500" rx="2" fill="#f3f6f9" stroke="#fff" stroke-width="1.500"/><path d="M4.500 4.500h30v14h-30zM4.500 9h30M4.500 14h30M9.500 4.500V14M14.500 4.500V14M19.500 4.500V14M24.500 4.500V14M29.500 4.500V14M11 14v4.500M28 14v4.500" fill="none" stroke="#33475b"/></svg></div>
<div class="ar"><svg width="10" height="6"><path d="M0 6h10L5 0z" fill="#fff"/></svg></div>`);

def('x-menu',`:host{position:absolute;left:1275px;top:825px;z-index:30;box-sizing:border-box;width:276px;height:219px;background:#eee linear-gradient(#d6d6d6,#d6d6d6) 32px 2px/1px 213px no-repeat;border:1px solid #9c9c9c;padding-top:2px;box-shadow:3px 3px 4px rgba(0,0,0,.45);font-size:14.300px;color:#151515}
.i{height:24px;display:flex;align-items:center;padding-left:36px;justify-content:space-between;position:relative;white-space:nowrap}
.s{height:7px;margin-left:33px;margin-right:3px;box-sizing:border-box}
.s::before{content:"";display:block;height:1px;background:#d6d6d6;position:relative;top:3px}
.ck{position:absolute;left:2px;top:0;width:25px;height:25px;box-sizing:border-box;background:#c0deef;border:1px solid #3a9ad9;display:flex;align-items:center;justify-content:center}`,
`<div class="i">Toolbars<svg style="margin-right:12px;margin-top:-3px" width="5" height="9"><path d="M0 0l5 4.500L0 9z" fill="#222"/></svg></div><div class="s"></div>
<div class="i">Cascade windows</div><div class="i">Show windows stacked</div><div class="i">Show windows side by side</div><div class="i">Show the desktop</div><div class="s"></div>
<div class="i">Task Manager</div><div class="s"></div>
<div class="i"><span class="ck"><svg width="12" height="11"><path d="M1 6l3.500 3.500L11 1" fill="none" stroke="#222" stroke-width="2.500"/></svg></span>Lock all taskbars</div>
<div class="i">Properties</div>`);
</script></body></html>
